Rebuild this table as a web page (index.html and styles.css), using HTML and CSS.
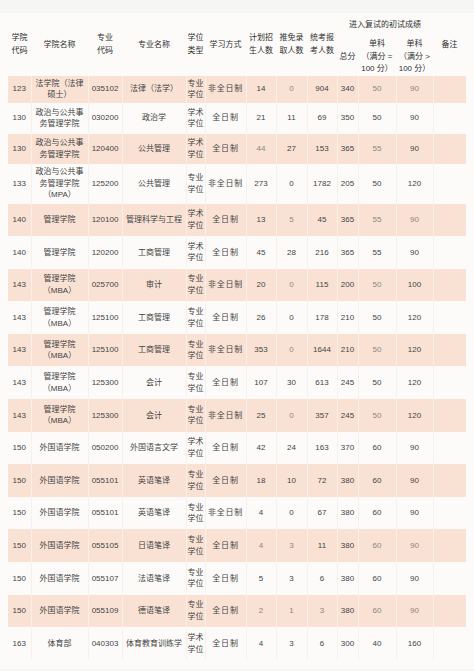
FILE: index.html
```html
<!DOCTYPE html>
<html lang="zh">
<head>
<meta charset="utf-8">
<link rel="stylesheet" href="styles.css">
</head>
<body>
<div class="sheet">
<table class="grid">
<colgroup>
<col class="c1"><col class="c2"><col class="c3"><col class="c4"><col class="c5"><col class="c6"><col class="c7"><col class="c8"><col class="c9"><col class="c10"><col class="c11"><col class="c12"><col class="c13">
</colgroup>
<thead>
<tr class="h1">
<th rowspan="2">学院<br>代码</th>
<th rowspan="2">学院名称</th>
<th rowspan="2">专业<br>代码</th>
<th rowspan="2">专业名称</th>
<th rowspan="2">学位<br>类型</th>
<th rowspan="2">学习方式</th>
<th rowspan="2">计划招<br>生人数</th>
<th rowspan="2">推免录<br>取人数</th>
<th rowspan="2">统考报<br>考人数</th>
<th colspan="3" class="grp">进入复试的初试成绩</th>
<th rowspan="2">备注</th>
</tr>
<tr class="h2">
<th>总分</th>
<th>单科<br>（满分 =<br>100 分）</th>
<th>单科<br>（满分 &gt;<br>100 分）</th>
</tr>
</thead>
<tbody>
<tr class="pk r27"><td>123</td><td>法学院（法律<br>硕士）</td><td>035102</td><td>法律（法学）</td><td>专业<br>学位</td><td class="ws">非全日制</td><td>14</td><td class="lt">0</td><td>904</td><td>340</td><td class="lt">50</td><td class="lt">90</td><td></td></tr>
<tr class="r31"><td>130</td><td>政治与公共事<br>务管理学院</td><td>030200</td><td>政治学</td><td>学术<br>学位</td><td class="ws">全日制</td><td>21</td><td>11</td><td>69</td><td>350</td><td>50</td><td>90</td><td></td></tr>
<tr class="pk r30"><td>130</td><td>政治与公共事<br>务管理学院</td><td>120400</td><td>公共管理</td><td>学术<br>学位</td><td class="ws">全日制</td><td class="lt">44</td><td>27</td><td>153</td><td>365</td><td class="lt">55</td><td>90</td><td></td></tr>
<tr class="r40"><td>133</td><td>政治与公共事<br>务管理学院<br>（MPA）</td><td>125200</td><td>公共管理</td><td>专业<br>学位</td><td class="ws">非全日制</td><td>273</td><td>0</td><td>1782</td><td>205</td><td>50</td><td>120</td><td></td></tr>
<tr class="pk"><td>140</td><td>管理学院</td><td>120100</td><td>管理科学与工程</td><td>学术<br>学位</td><td class="ws">全日制</td><td>13</td><td class="lt">5</td><td>45</td><td>365</td><td class="lt">55</td><td class="lt">90</td><td></td></tr>
<tr><td>140</td><td>管理学院</td><td>120200</td><td>工商管理</td><td>学术<br>学位</td><td class="ws">全日制</td><td>45</td><td>28</td><td>216</td><td>365</td><td>55</td><td>90</td><td></td></tr>
<tr class="pk"><td>143</td><td>管理学院<br>（MBA）</td><td>025700</td><td>审计</td><td>专业<br>学位</td><td class="ws">非全日制</td><td>20</td><td class="lt">0</td><td>115</td><td>200</td><td class="lt">50</td><td>100</td><td></td></tr>
<tr><td>143</td><td>管理学院<br>（MBA）</td><td>125100</td><td>工商管理</td><td>专业<br>学位</td><td class="ws">全日制</td><td>26</td><td>0</td><td>178</td><td>210</td><td>50</td><td>120</td><td></td></tr>
<tr class="pk"><td>143</td><td>管理学院<br>（MBA）</td><td>125100</td><td>工商管理</td><td>专业<br>学位</td><td class="ws">非全日制</td><td>353</td><td class="lt">0</td><td>1644</td><td>210</td><td class="lt">50</td><td>120</td><td></td></tr>
<tr><td>143</td><td>管理学院<br>（MBA）</td><td>125300</td><td>会计</td><td>专业<br>学位</td><td class="ws">全日制</td><td>107</td><td>30</td><td>613</td><td>245</td><td>50</td><td>120</td><td></td></tr>
<tr class="pk"><td>143</td><td>管理学院<br>（MBA）</td><td>125300</td><td>会计</td><td>专业<br>学位</td><td class="ws">非全日制</td><td>25</td><td class="lt">0</td><td>357</td><td>245</td><td class="lt">50</td><td>120</td><td></td></tr>
<tr><td>150</td><td>外国语学院</td><td>050200</td><td>外国语言文学</td><td>学术<br>学位</td><td class="ws">全日制</td><td>42</td><td>24</td><td>163</td><td>370</td><td>60</td><td>90</td><td></td></tr>
<tr class="pk"><td>150</td><td>外国语学院</td><td>055101</td><td>英语笔译</td><td>专业<br>学位</td><td class="ws">全日制</td><td>18</td><td>10</td><td>72</td><td>380</td><td>60</td><td>90</td><td></td></tr>
<tr><td>150</td><td>外国语学院</td><td>055101</td><td>英语笔译</td><td>专业<br>学位</td><td class="ws">非全日制</td><td>4</td><td>0</td><td>67</td><td>380</td><td>60</td><td>90</td><td></td></tr>
<tr class="pk"><td>150</td><td>外国语学院</td><td>055105</td><td>日语笔译</td><td>专业<br>学位</td><td class="ws">全日制</td><td class="lt">4</td><td class="lt">3</td><td>11</td><td>380</td><td class="lt">60</td><td class="lt">90</td><td></td></tr>
<tr><td>150</td><td>外国语学院</td><td>055107</td><td>法语笔译</td><td>专业<br>学位</td><td class="ws">全日制</td><td>5</td><td>3</td><td>6</td><td>380</td><td>60</td><td>90</td><td></td></tr>
<tr class="pk"><td>150</td><td>外国语学院</td><td>055109</td><td>德语笔译</td><td>专业<br>学位</td><td class="ws">全日制</td><td class="lt">2</td><td class="lt">1</td><td class="lt">3</td><td>380</td><td class="lt">60</td><td class="lt">90</td><td></td></tr>
<tr><td>163</td><td>体育部</td><td>040303</td><td>体育教育训练学</td><td>学术<br>学位</td><td class="ws">全日制</td><td>4</td><td>3</td><td>6</td><td>300</td><td>40</td><td>160</td><td></td></tr>
</tbody>
</table>
</div>
</body>
</html>
```

FILE: styles.css
```css
html, body {
  margin: 0;
  padding: 0;
}
body {
  background: #f6f6f5;
  font-family: "Liberation Sans", "Noto Sans CJK SC", sans-serif;
  color: #444;
}
.sheet {
  background: #fcfbf9;
  margin-top: 13px;
  padding: 0 8px 9px 8px;
}
.grid {
  table-layout: fixed;
  width: 458px;
  border-collapse: collapse;
  font-size: 8px;
}
.c1 { width: 23px; }
.c2 { width: 57px; }
.c3 { width: 34px; }
.c4 { width: 64px; }
.c5 { width: 19px; }
.c6 { width: 41px; }
.c7 { width: 30px; }
.c8 { width: 31px; }
.c9 { width: 30px; }
.c10 { width: 21px; }
.c11 { width: 38px; }
.c12 { width: 37px; }
.c13 { width: 33px; }

th {
  font-weight: normal;
  color: #2f2f2f;
  line-height: 13px;
  padding: 0;
  text-align: center;
  vertical-align: middle;
  white-space: nowrap;
  overflow: hidden;
}
.h1 { height: 20px; }
.h1 .grp { padding-top: 3px; }
.h2 { height: 42px; }
.h2 th { line-height: 12.5px; padding-top: 5px; }

td {
  padding: 0;
  line-height: 11.5px;
  text-align: center;
  vertical-align: middle;
  white-space: nowrap;
  overflow: hidden;
  height: 33px;
  border-left: 1px solid rgba(240, 236, 230, 0.6);
}
td:first-child { border-left: none; }
.ws { letter-spacing: 0.8px; }
.pk td {
  background: #f9e2d4;
  border-left: 1.5px solid #fbefe8;
}
.pk td:first-child { border-left: none; }
.lt { color: #8d8681; }
.r27 td { height: 27px; }
.r31 td { height: 31px; }
.r30 td { height: 30px; }
.r40 td { height: 40px; }
tbody tr:nth-child(n+5) td { height: 32.6px; }
```
